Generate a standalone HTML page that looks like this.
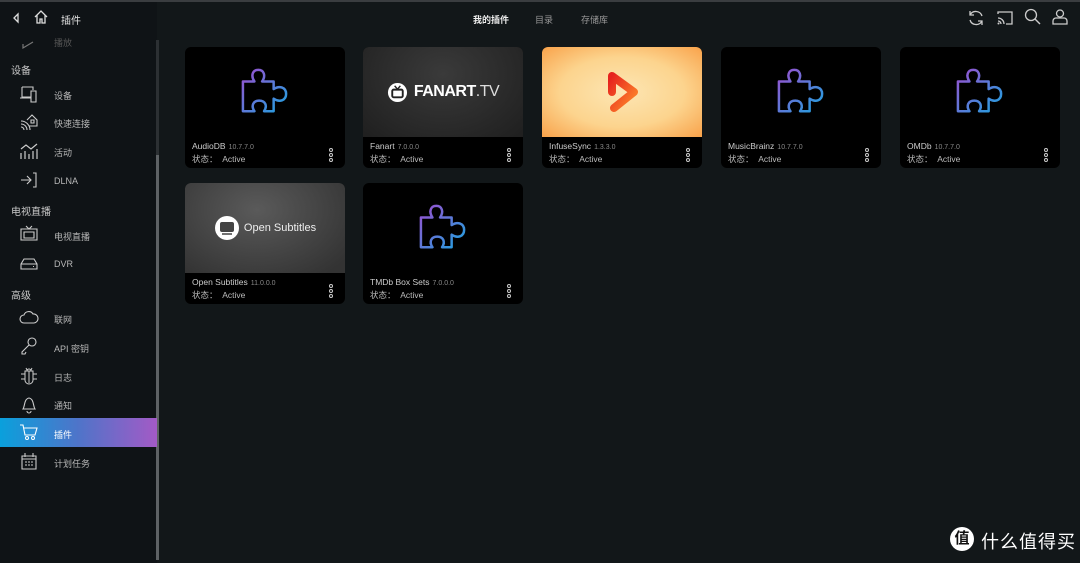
<!DOCTYPE html>
<html><head><meta charset="utf-8"><style>
*{margin:0;padding:0;box-sizing:border-box}
body{width:1080px;height:563px;background:#121719;font-family:"Liberation Sans","Noto Sans CJK SC",sans-serif;color:#ddd;position:relative;overflow:hidden}
.topline{position:absolute;left:0;top:0;width:1080px;height:2px;background:#3a3d40}
.side{position:absolute;left:0;top:0;width:157px;height:563px;background:#0f1316}
.sb{position:absolute;left:156px;top:40px;width:3px;height:520px;background:#2c3033}
.sb2{position:absolute;left:156px;top:155px;width:3px;height:405px;background:#5e6265}
.t{position:absolute;font-size:9px;color:#b8b8b8;white-space:nowrap}
.h{position:absolute;font-size:10px;color:#c8c8c8;left:11px}
.ic{position:absolute;left:19px;width:20px;height:20px}
.active{position:absolute;left:0;top:418px;width:157px;height:29px;background:linear-gradient(90deg,#0aa0dc,#4f74c9 50%,#a35ac6)}
.card{position:absolute;width:160px;border-radius:6px;background:#000;overflow:hidden}
.img{height:90px;display:flex;align-items:center;justify-content:center}
.nm{position:absolute;left:7px;top:94px;font-size:8.5px;color:#ccc}
.nm span{font-size:7px;color:#888;margin-left:3px}
.st{position:absolute;left:7px;top:106px;font-size:8.5px;color:#bbb}
.dots{position:absolute;right:11px;top:101px;width:5px}
.dots i{display:block;width:4px;height:4px;border:1px solid #ccc;border-radius:50%;margin-bottom:1px}
.nav{position:absolute;top:13px;font-size:9px;color:#999}
</style></head><body>
<div class="side"></div>
<div class="topline"></div>
<div class="sb"></div><div class="sb2"></div>
<svg style="position:absolute;left:11px;top:12px" width="10" height="12" viewBox="0 0 10 12"><path d="M7 2 L3 6 L7 10 Z" fill="none" stroke="#ddd" stroke-width="1.3"/></svg>
<svg style="position:absolute;left:33px;top:9px" width="16" height="16" viewBox="0 0 16 16"><path d="M2 8 L8 2 L14 8 M4 6 V14 H7 V10 H9 V14 H12 V6" fill="none" stroke="#ddd" stroke-width="1.3"/></svg>
<div class="t" style="left:61px;top:12px;font-size:10px;color:#e0e0e0">插件</div>
<svg class="ic" style="top:32px" viewBox="0 0 20 20"><path d="M4 12 V16 L14 10" fill="none" stroke="#777" stroke-width="1.2"/></svg>
<div class="t" style="left:54px;top:36px;color:#555">播放</div>
<div class="h" style="top:62px">设备</div>
<svg class="ic" style="top:84px" viewBox="0 0 20 20"><path d="M3 3 H14 V6 M3 3 V13 H12 M1 14 H12 M12 7 H17 V18 H12 Z" fill="none" stroke="#ccc" stroke-width="1.1"/></svg>
<div class="t" style="left:54px;top:89px">设备</div>
<svg class="ic" style="top:112px" viewBox="0 0 20 20"><path d="M8 8 L13 3 L18 8 V14 H10 M12 8 h3 v3 h-3z M2 9 a9 9 0 0 1 9 9 M2 12 a6 6 0 0 1 6 6 M2 15 a3 3 0 0 1 3 3" fill="none" stroke="#ccc" stroke-width="1.1"/></svg>
<div class="t" style="left:54px;top:117px">快速连接</div>
<svg class="ic" style="top:141px" viewBox="0 0 20 20"><path d="M2 8 L7 4 L12 8 L18 3 M2 12 v6 M6 10 v8 M10 13 v5 M14 10 v8 M18 8 v10" fill="none" stroke="#ccc" stroke-width="1.2"/></svg>
<div class="t" style="left:54px;top:146px">活动</div>
<svg class="ic" style="top:170px" viewBox="0 0 20 20"><path d="M2 10 H12 M8 6 L12 10 L8 14 M14 3 H17 V17 H14" fill="none" stroke="#ccc" stroke-width="1.1"/></svg>
<div class="t" style="left:54px;top:176px">DLNA</div>
<div class="h" style="top:203px">电视直播</div>
<svg class="ic" style="top:224px" viewBox="0 0 20 20"><path d="M7 2 L10 5 L13 2 M2 5 H18 V16 H2 Z M5 8 H15 V14 H5 Z" fill="none" stroke="#ccc" stroke-width="1.1"/></svg>
<div class="t" style="left:54px;top:230px">电视直播</div>
<svg class="ic" style="top:254px" viewBox="0 0 20 20"><path d="M2 10 L5 5 H15 L18 10 V15 H2 Z M2 10 H18 M14 12.5 h1" fill="none" stroke="#ccc" stroke-width="1.1"/></svg>
<div class="t" style="left:54px;top:259px">DVR</div>
<div class="h" style="top:287px">高级</div>
<svg class="ic" style="top:308px" viewBox="0 0 20 20"><path d="M5 15 a4 4 0 0 1 0-8 a5 5 0 0 1 9-1 a4.5 4.5 0 0 1 1 9 Z" fill="none" stroke="#ccc" stroke-width="1.1"/></svg>
<div class="t" style="left:54px;top:313px">联网</div>
<svg class="ic" style="top:336px" viewBox="0 0 20 20"><circle cx="13" cy="6" r="4" fill="none" stroke="#ccc" stroke-width="1.1"/><path d="M10 9 L3 16 V18 H6 L7 16" fill="none" stroke="#ccc" stroke-width="1.1"/></svg>
<div class="t" style="left:54px;top:342px">API 密钥</div>
<svg class="ic" style="top:365px" viewBox="0 0 20 20"><path d="M6 6 H14 V15 a4 4 0 0 1-8 0 Z M8 6 a2 2 0 0 1 4 0 M10 6 V18 M2 9 H6 M14 9 H18 M2 14 H6 M14 14 H18 M7 3 L8 5 M13 3 L12 5" fill="none" stroke="#ccc" stroke-width="1"/></svg>
<div class="t" style="left:54px;top:371px">日志</div>
<svg class="ic" style="top:394px" viewBox="0 0 20 20"><path d="M4 15 C6 12 5 5 10 4 C15 5 14 12 16 15 Z M8 17 a2 2 0 0 0 4 0" fill="none" stroke="#ccc" stroke-width="1.1"/></svg>
<div class="t" style="left:54px;top:399px">通知</div>
<div class="active"></div>
<svg class="ic" style="top:422px" viewBox="0 0 20 20"><path d="M1 3 H4 L6 13 H16 L18 6 H5" fill="none" stroke="#fff" stroke-width="1.1"/><circle cx="8" cy="16" r="1.5" fill="none" stroke="#fff"/><circle cx="14" cy="16" r="1.5" fill="none" stroke="#fff"/></svg>
<div class="t" style="left:54px;top:428px;color:#fff">插件</div>
<svg class="ic" style="top:451px" viewBox="0 0 20 20"><path d="M3 5 H17 V18 H3 Z M3 8 H17 M6 2 V6 M14 2 V6" fill="none" stroke="#ccc" stroke-width="1.1"/><path d="M6 11h2M9 11h2M12 11h2M6 14h2M9 14h2M12 14h2" stroke="#ccc"/></svg>
<div class="t" style="left:54px;top:457px">计划任务</div>

<div class="nav" style="left:473px;color:#eee;font-weight:bold">我的插件</div>
<div class="nav" style="left:535px">目录</div>
<div class="nav" style="left:581px">存储库</div>

<svg style="position:absolute;left:966px;top:8px" width="20" height="20" viewBox="0 0 20 20"><path d="M16 8 A6.5 6.5 0 0 0 4 7 M4 3 V7 H8 M4 12 A6.5 6.5 0 0 0 16 13 M16 17 V13 H12" fill="none" stroke="#ccc" stroke-width="1.3"/></svg>
<svg style="position:absolute;left:996px;top:9px" width="18" height="18" viewBox="0 0 18 18"><path d="M2 5 V3 H16 V15 H10 M2 9 a6 6 0 0 1 6 6 M2 12 a3 3 0 0 1 3 3" fill="none" stroke="#ccc" stroke-width="1.3"/><circle cx="2.5" cy="14.5" r="1" fill="#ccc"/></svg>
<svg style="position:absolute;left:1024px;top:8px" width="18" height="18" viewBox="0 0 18 18"><circle cx="7" cy="7" r="5.5" fill="none" stroke="#ccc" stroke-width="1.3"/><path d="M11 11 L16 16" stroke="#ccc" stroke-width="1.4"/></svg>
<svg style="position:absolute;left:1051px;top:8px" width="18" height="18" viewBox="0 0 18 18"><circle cx="9" cy="5.5" r="3.5" fill="none" stroke="#ccc" stroke-width="1.3"/><path d="M2 16 V13 a3 3 0 0 1 3-3 H13 a3 3 0 0 1 3 3 V16 Z" fill="none" stroke="#ccc" stroke-width="1.3"/></svg>

<svg width="0" height="0" style="position:absolute"><defs><linearGradient id="pg" x1="0" y1="0" x2="1" y2="1"><stop offset="0" stop-color="#9b4fd0"/><stop offset="1" stop-color="#1ea3e0"/></linearGradient>
<symbol id="pz" viewBox="0 0 50 50"><path d="M2 14 H14 C10 8 12 2 18 2 C24 2 26 8 22 14 H34 V22 C40 18 47 20 47 27 C47 34 40 36 34 32 V45 H24 C28 39 25 34 19 34 C13 34 10 39 14 45 H2 Z" fill="none" stroke="url(#pg)" stroke-width="2.6" stroke-linejoin="round"/></symbol></defs></svg>

<div class="card" style="left:185px;top:47px;height:121px"><div class="img"><svg width="48" height="48"><use href="#pz"/></svg></div><div class="nm">AudioDB<span>10.7.7.0</span></div><div class="st">状态：&nbsp; Active</div><div class="dots"><i></i><i></i><i></i></div></div>
<div class="card" style="left:363px;top:47px;height:121px"><div class="img" style="background:radial-gradient(ellipse at 50% 30%,#3a3a3a,#1f1f1f)"><svg width="21" height="21" viewBox="0 0 22 22"><circle cx="11" cy="11" r="10" fill="#fff"/><rect x="5.5" y="8" width="11" height="8" rx="1.5" fill="none" stroke="#222" stroke-width="2"/><path d="M8 4 L11 7.5 L14 4" stroke="#222" stroke-width="1.5" fill="none"/></svg><span style="color:#fff;font-size:16px;font-weight:bold;margin-left:6px;letter-spacing:-0.5px">FANART<span style="font-weight:normal;color:#ddd">.TV</span></span></div><div class="nm">Fanart<span>7.0.0.0</span></div><div class="st">状态：&nbsp; Active</div><div class="dots"><i></i><i></i><i></i></div></div>
<div class="card" style="left:542px;top:47px;height:121px"><div class="img" style="background:radial-gradient(ellipse at 50% 50%,#fde6b4 0,#fcd48e 55%,#f9a24a 100%)"><svg width="36" height="44" viewBox="0 0 36 44"><defs><linearGradient id="ig" x1="0" y1="0" x2="1" y2="1"><stop offset="0" stop-color="#e6231e"/><stop offset="1" stop-color="#ff8a2a"/></linearGradient></defs><path d="M8 6 V22 M8 6 L30 22 L10 38" fill="none" stroke="url(#ig)" stroke-width="8" stroke-linecap="round" stroke-linejoin="round"/></svg></div><div class="nm">InfuseSync<span>1.3.3.0</span></div><div class="st">状态：&nbsp; Active</div><div class="dots"><i></i><i></i><i></i></div></div>
<div class="card" style="left:721px;top:47px;height:121px"><div class="img"><svg width="48" height="48"><use href="#pz"/></svg></div><div class="nm">MusicBrainz<span>10.7.7.0</span></div><div class="st">状态：&nbsp; Active</div><div class="dots"><i></i><i></i><i></i></div></div>
<div class="card" style="left:900px;top:47px;height:121px"><div class="img"><svg width="48" height="48"><use href="#pz"/></svg></div><div class="nm">OMDb<span>10.7.7.0</span></div><div class="st">状态：&nbsp; Active</div><div class="dots"><i></i><i></i><i></i></div></div>
<div class="card" style="left:185px;top:183px;height:121px"><div class="img" style="background:radial-gradient(ellipse at 45% 30%,#5a5a5a,#333 90%)"><svg width="26" height="26" viewBox="0 0 26 26"><circle cx="13" cy="13" r="12" fill="#fff"/><rect x="6" y="7" width="14" height="10" rx="2" fill="#444"/><path d="M8 19 H18" stroke="#444" stroke-width="1.5"/></svg><span style="color:#eee;font-size:11px;margin-left:4px">Open Subtitles</span></div><div class="nm">Open Subtitles<span>11.0.0.0</span></div><div class="st">状态：&nbsp; Active</div><div class="dots"><i></i><i></i><i></i></div></div>
<div class="card" style="left:363px;top:183px;height:121px"><div class="img"><svg width="48" height="48"><use href="#pz"/></svg></div><div class="nm">TMDb Box Sets<span>7.0.0.0</span></div><div class="st">状态：&nbsp; Active</div><div class="dots"><i></i><i></i><i></i></div></div>

<div style="position:absolute;left:950px;top:527px;width:24px;height:24px;border-radius:50%;background:#fff;color:#111;font-size:15px;font-weight:bold;text-align:center;line-height:24px">值</div>
<div style="position:absolute;left:981px;top:528px;font-size:18px;color:#fff;letter-spacing:1px">什么值得买</div>
</body></html>
